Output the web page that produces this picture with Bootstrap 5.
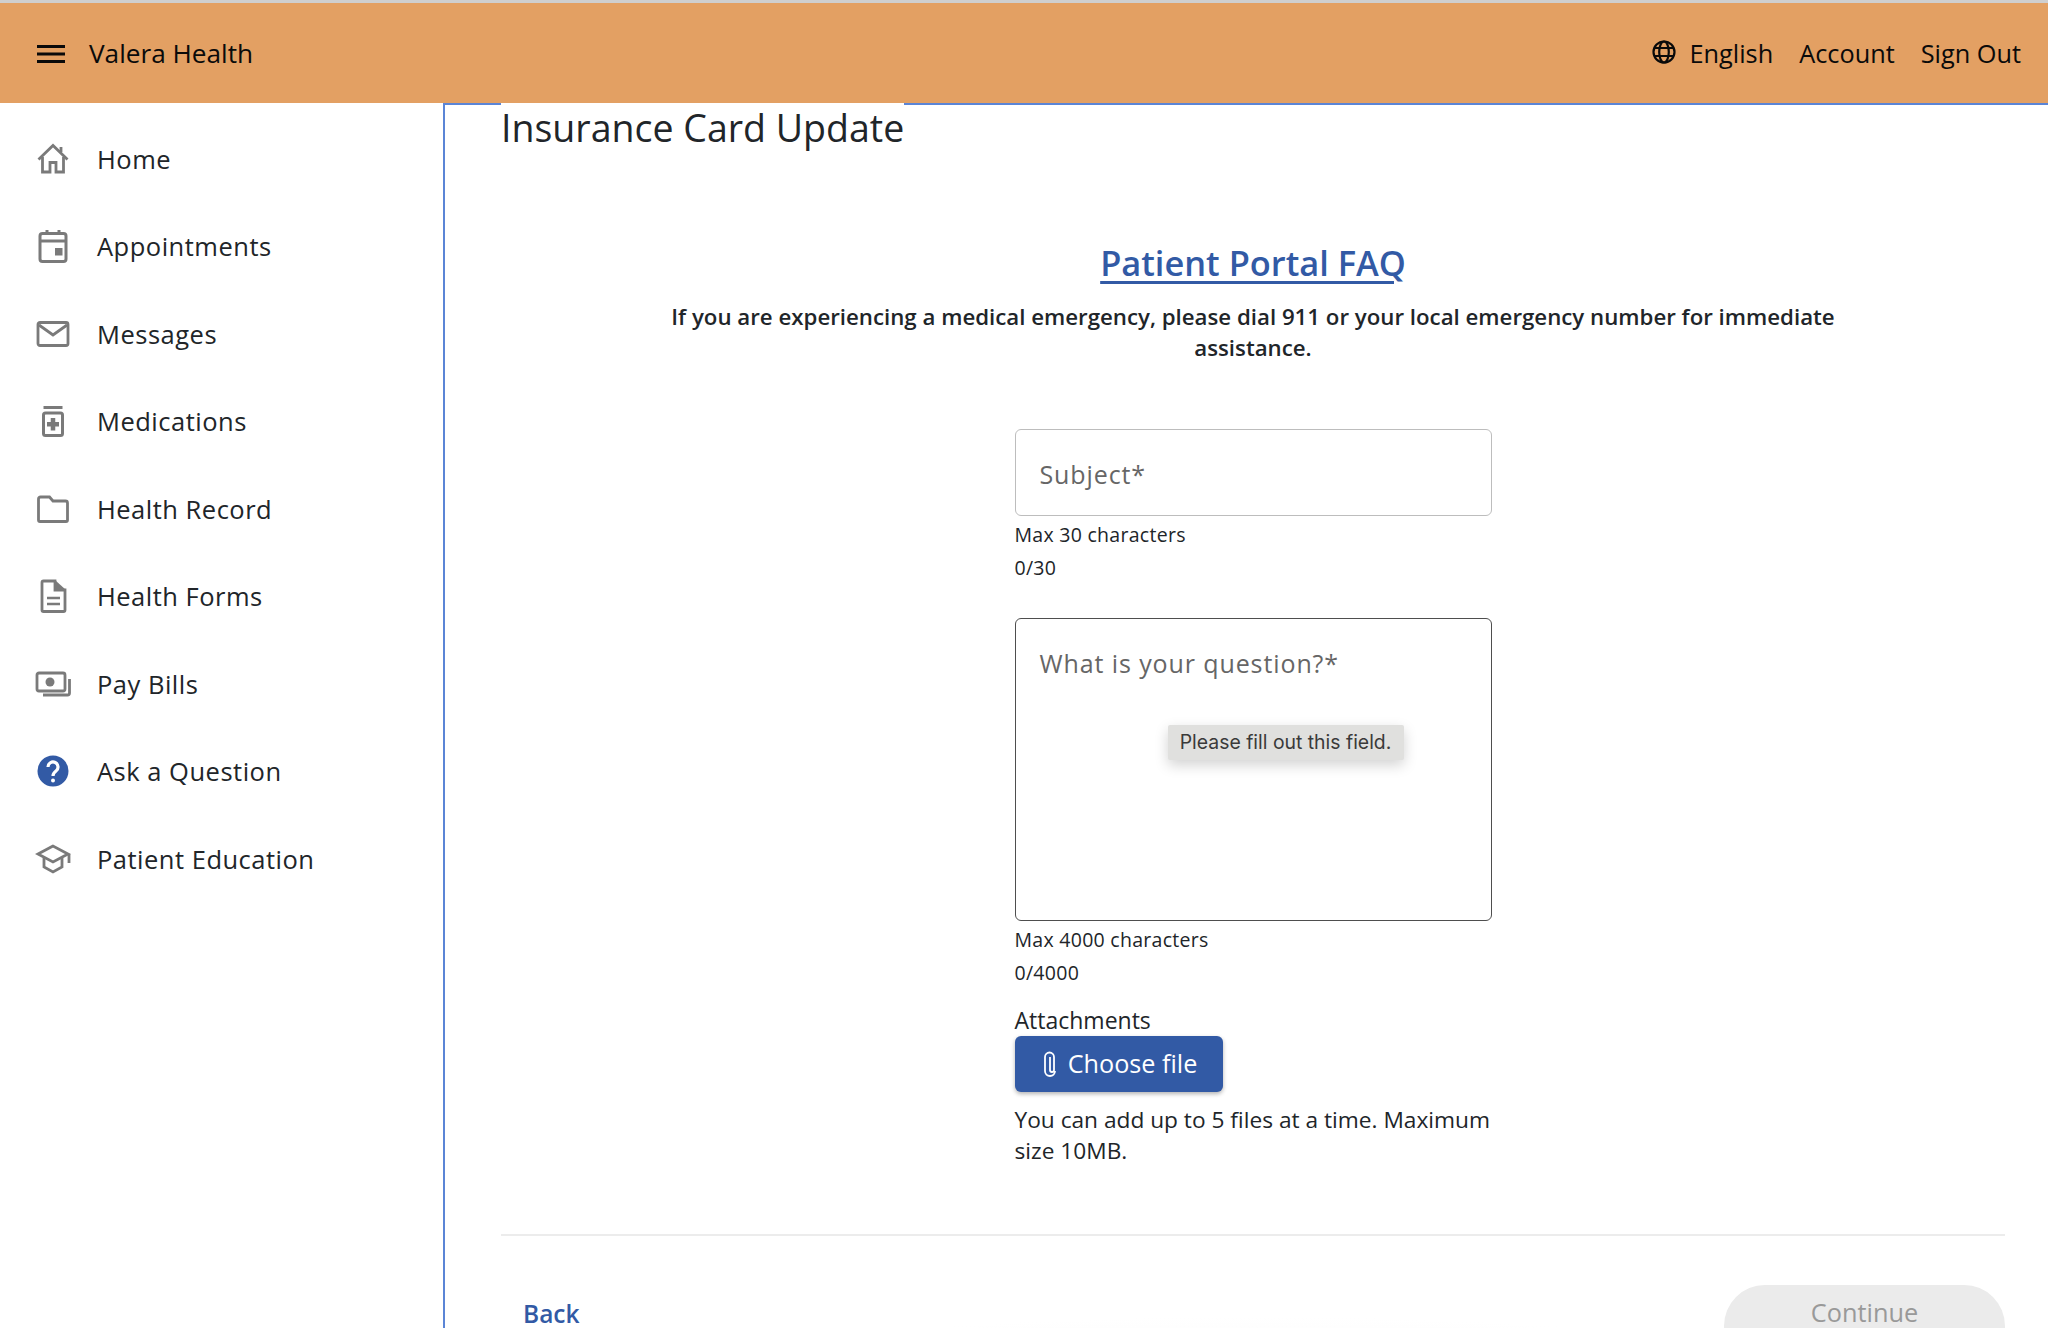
<!DOCTYPE html>
<html lang="en">
<head>
<meta charset="utf-8">
<title>Insurance Card Update</title>
<link href="https://cdn.jsdelivr.net/npm/bootstrap@5.3.0/dist/css/bootstrap.min.css" rel="stylesheet">
<style>
html,body{height:1328px;overflow:hidden}
body{font-family:"Open Sans","Liberation Sans",sans-serif;color:#212529;background:#fff;border-top:3px solid #cfcfcf}
.vh-bar{background:#e3a063;height:100px;padding:2px 27px 0 36px;color:#0a0a0a;font-size:25.3px;flex-wrap:nowrap}
.vh-bar a{color:#0a0a0a;text-decoration:none}
.vh-brand{margin-left:23px;font-size:26.2px}
.vh-gap{margin-right:26px}
.vh-globe{margin-right:14px;margin-top:-4px}
.vh-wrap{height:1225px}
.vh-side{width:443px;flex:none;padding-top:12px}
.vh-item{height:87.5px;padding:0 0 0 35px;color:#212529;font-size:25.5px;letter-spacing:.5px;gap:26px}
.vh-ico{width:36px;height:36px;flex:none}
.vh-main{flex:1;min-width:0;border-left:2px solid #5b85d6;border-top:2px solid #5b85d6;padding:0 43px 0 56px}
.vh-title{display:inline-block;background:#fff;font-size:37.5px;font-weight:400;line-height:50px;margin:-2px 0 0;padding:0}
.vh-faq{font-size:34.4px;font-weight:600;line-height:48px;margin-top:86px;margin-bottom:0}
.vh-faq a{color:#325aa5;text-underline-offset:5px}
.vh-alert{width:1190px;font-size:22.25px;font-weight:600;line-height:31px;margin-top:14px}
.vh-form{width:477px;margin-top:66px}
.vh-field.form-floating>.form-control{height:87px;padding:0 25px;border:1.5px solid #bdbdbd;border-radius:6px;min-height:0}
.vh-field.form-floating>textarea.form-control{height:303px;border-color:#4e4e4e;resize:none}
.vh-field.form-floating>label{padding:0 25px;height:auto;top:28px;font-size:25px;line-height:34px;letter-spacing:.9px;color:#666;border:0}
.vh-second{margin-top:34px}
.vh-hint{font-size:19.5px;line-height:33px;letter-spacing:.28px}
.vh-hint-first{margin-top:2px}
.vh-tip{position:absolute;left:153px;top:107px;width:236px;height:35px;background:#e0e0de;border-radius:2px;box-shadow:0 5px 14px rgba(0,0,0,.18);font-family:"Inter","Liberation Sans",sans-serif;font-size:19.4px;line-height:35px;text-align:center;color:#3a3a3a}
.vh-label{font-size:23px;line-height:31px;margin-top:16px}
.vh-file{background:#325aa5;color:#fff;border:0;border-radius:6px;width:208px;height:56px;font-size:25.2px;padding:0 0 0 1px;gap:9px;box-shadow:0 2px 4px rgba(0,0,0,.3)}
.vh-file:hover,.vh-file:focus{background:#325aa5;color:#fff}
.vh-note{font-size:22.7px;line-height:31px;margin-top:12px}
.vh-rule{margin:68px 0 0;border:0;border-top:2px solid #ececec;opacity:1}
.vh-foot{margin-top:49px;padding-left:22px;height:82px;background:radial-gradient(ellipse 520px 50px at 50% 100%,#f9f9f9,#fff 100%)}
.vh-back{color:#325aa5;font-size:24.5px;font-weight:600;text-decoration:none;margin-top:11px}
.btn.vh-cont,.btn.vh-cont:disabled{width:281px;height:82px;background:#ebebeb;border:0;border-radius:41px;color:#999;font-size:25.3px;padding:0 0 26px;opacity:1}
</style>
</head>
<body>
<nav class="navbar vh-bar">
  <div class="d-flex align-items-center">
    <svg width="30" height="20" viewBox="0 0 30 20" aria-hidden="true"><path d="M1 2.500h28M1 10h28M1 17.500h28" stroke="#0a0a0a" stroke-width="3.200" fill="none"/></svg>
    <a class="vh-brand" href="#">Valera Health</a>
  </div>
  <div class="d-flex align-items-center">
    <svg width="24" height="24" viewBox="0 0 24 24" class="vh-globe" aria-hidden="true"><g fill="none" stroke="#0a0a0a" stroke-width="2.200"><circle cx="12" cy="12" r="10.500"/><ellipse cx="12" cy="12" rx="4.800" ry="10.500"/><path d="M2 8h20M2 16h20"/></g></svg>
    <a href="#" class="vh-gap">English</a>
    <a href="#" class="vh-gap">Account</a>
    <a href="#">Sign Out</a>
  </div>
</nav>
<div class="d-flex vh-wrap">
  <aside class="vh-side">
    <ul class="nav flex-column">
      <li><a class="nav-link d-flex align-items-center vh-item" href="#"><svg class="vh-ico" viewBox="0 0 36 36" aria-hidden="true"><g fill="none" stroke="#7a7a7a" stroke-width="2.800"><path d="M3.500 18.500 18 4.500l14.500 14"/><path d="M7.500 16v15h7.500v-9.500h6V31h7.500V16"/><path d="M26 6v5"/></g></svg><span>Home</span></a></li>
      <li><a class="nav-link d-flex align-items-center vh-item" href="#"><svg class="vh-ico" viewBox="0 0 36 36" aria-hidden="true"><g fill="#7a7a7a"><path d="M10.500 2h3v5h-3zM22.500 2h3v5h-3z"/><rect x="20" y="20" width="7.500" height="7.500"/></g><rect x="5" y="5.500" width="26" height="28" rx="2.500" fill="none" stroke="#7a7a7a" stroke-width="3"/><path d="M5 13h26" stroke="#7a7a7a" stroke-width="3"/></svg><span>Appointments</span></a></li>
      <li><a class="nav-link d-flex align-items-center vh-item" href="#"><svg class="vh-ico" viewBox="0 0 36 36" aria-hidden="true"><rect x="3" y="6.500" width="30" height="23" rx="2" fill="none" stroke="#7a7a7a" stroke-width="2.800"/><path d="M4 9l14 10L32 9" fill="none" stroke="#7a7a7a" stroke-width="2.800"/></svg><span>Messages</span></a></li>
      <li><a class="nav-link d-flex align-items-center vh-item" href="#"><svg class="vh-ico" viewBox="0 0 36 36" aria-hidden="true"><path d="M8.500 3h19v3h-19z" fill="#7a7a7a"/><rect x="8.500" y="10" width="19" height="22.500" rx="2" fill="none" stroke="#7a7a7a" stroke-width="3"/><path d="M18 15v12.500M12 21.300h12" stroke="#7a7a7a" stroke-width="4.500"/></svg><span>Medications</span></a></li>
      <li><a class="nav-link d-flex align-items-center vh-item" href="#"><svg class="vh-ico" viewBox="0 0 36 36" aria-hidden="true"><path d="M3.500 8a2 2 0 0 1 2-2h9l3.500 4h12.500a2 2 0 0 1 2 2v17a1.500 1.500 0 0 1-1.500 1.500H5a1.500 1.500 0 0 1-1.500-1.500z" fill="none" stroke="#7a7a7a" stroke-width="2.800"/></svg><span>Health Record</span></a></li>
      <li><a class="nav-link d-flex align-items-center vh-item" href="#"><svg class="vh-ico" viewBox="0 0 36 36" aria-hidden="true"><path d="M7 4.500a1.500 1.500 0 0 1 1.500-1.500H20v9h10v20a1.500 1.500 0 0 1-1.500 1.500h-20A1.500 1.500 0 0 1 7 32z" fill="none" stroke="#7a7a7a" stroke-width="2.800"/><path d="M20 2l11 10H20z" fill="#7a7a7a"/><path d="M12 20h13M12 26h13" stroke="#7a7a7a" stroke-width="2.500"/></svg><span>Health Forms</span></a></li>
      <li><a class="nav-link d-flex align-items-center vh-item" href="#"><svg class="vh-ico" viewBox="0 0 36 36" aria-hidden="true"><rect x="2" y="7" width="28" height="18" rx="2" fill="none" stroke="#7a7a7a" stroke-width="2.800"/><circle cx="15" cy="16" r="4.500" fill="#7a7a7a"/><path d="M34.500 13v14a2 2 0 0 1-2 2H8" fill="none" stroke="#7a7a7a" stroke-width="2.800"/></svg><span>Pay Bills</span></a></li>
      <li><a class="nav-link d-flex align-items-center vh-item" href="#"><svg class="vh-ico" viewBox="0 0 36 36" aria-hidden="true"><circle cx="18" cy="18" r="15.500" fill="#325aa5"/><path d="M13 14a5 5 0 1 1 8 4c-2 1.500-3 2.500-3 5" fill="none" stroke="#fff" stroke-width="3.200"/><circle cx="18" cy="27.500" r="2" fill="#fff"/></svg><span>Ask a Question</span></a></li>
      <li><a class="nav-link d-flex align-items-center vh-item" href="#"><svg class="vh-ico" viewBox="0 0 36 36" aria-hidden="true"><g fill="none" stroke="#7a7a7a" stroke-width="2.800"><path d="M18 5 3 13l15 8 15-8z"/><path d="M9 17v9l9 5 9-5v-9"/><path d="M34 13v9"/></g></svg><span>Patient Education</span></a></li>
    </ul>
  </aside>
  <main class="vh-main">
    <h1 class="vh-title">Insurance Card Update</h1>
    <h2 class="vh-faq text-center"><a href="#">Patient Portal FAQ</a></h2>
    <p class="vh-alert text-center mx-auto mb-0">If you are experiencing a medical emergency, please dial 911 or your local emergency number for immediate assistance.</p>
    <form class="vh-form mx-auto">
      <div class="form-floating vh-field">
        <input type="text" class="form-control" id="vh-subject" placeholder=" ">
        <label for="vh-subject">Subject*</label>
      </div>
      <div class="vh-hint vh-hint-first">Max 30 characters</div>
      <div class="vh-hint">0/30</div>
      <div class="form-floating vh-field position-relative vh-second">
        <textarea class="form-control" id="vh-question" placeholder=" "></textarea>
        <label for="vh-question">What is your question?*</label>
        <div class="vh-tip">Please fill out this field.</div>
      </div>
      <div class="vh-hint vh-hint-first">Max 4000 characters</div>
      <div class="vh-hint">0/4000</div>
      <div class="vh-label">Attachments</div>
      <button type="button" class="btn vh-file d-inline-flex align-items-center justify-content-center">
        <svg width="18" height="28" viewBox="0 0 18 26" aria-hidden="true"><path d="M9 6v13a2 2 0 0 0 4 0V6a4.500 4.500 0 0 0-9 0v14a5 5 0 0 0 10 0" fill="none" stroke="#fff" stroke-width="1.800"/></svg>
        <span>Choose file</span>
      </button>
      <p class="vh-note mb-0">You can add up to 5 files at a time. Maximum size 10MB.</p>
    </form>
    <hr class="vh-rule">
    <div class="vh-foot d-flex justify-content-between align-items-start">
      <a href="#" class="vh-back">Back</a>
      <button type="button" class="btn vh-cont" disabled>Continue</button>
    </div>
  </main>
</div>
<script src="https://cdn.jsdelivr.net/npm/bootstrap@5.3.0/dist/js/bootstrap.bundle.min.js"></script>
</body>
</html>
